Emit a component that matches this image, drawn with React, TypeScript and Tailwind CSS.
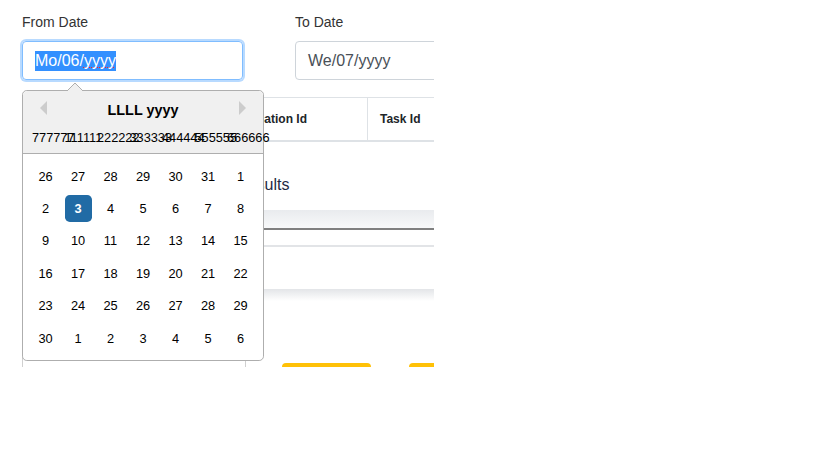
import React from "react";

const dayNames = ["777777", "111111", "222222", "333333", "444444", "555555", "666666"];

const weeks: { d: number; sel?: boolean }[][] = [
  [26, 27, 28, 29, 30, 31, 1].map((d) => ({ d })),
  [2, 3, 4, 5, 6, 7, 8].map((d) => ({ d, sel: d === 3 })),
  [9, 10, 11, 12, 13, 14, 15].map((d) => ({ d })),
  [16, 17, 18, 19, 20, 21, 22].map((d) => ({ d })),
  [23, 24, 25, 26, 27, 28, 29].map((d) => ({ d })),
  [30, 1, 2, 3, 4, 5, 6].map((d) => ({ d })),
];

function DatePickerPopup() {
  return (
    <div className="absolute left-[22px] top-[90px] z-10 w-[242px] rounded-[4.8px] border border-[#aeaeae] bg-white text-black">
      {/* notch */}
      <svg className="absolute left-[43px] top-[-9px]" width="18" height="10" viewBox="0 0 18 10">
        <polygon points="0,10 9,1 18,10" fill="#f0f0f0" />
        <polyline points="0.5,9.5 9,1 17.5,9.5" fill="none" stroke="#aeaeae" strokeWidth="1" />
      </svg>

      {/* header */}
      <div className="relative rounded-t-[4.8px] border-b border-[#aeaeae] bg-[#f0f0f0] pt-[8px]">
        <svg className="absolute left-[17px] top-[10px]" width="7" height="14" viewBox="0 0 7 14">
          <polygon points="7,0 0,7 7,14" fill="#ccc" />
        </svg>
        <svg className="absolute right-[17px] top-[10px]" width="7" height="14" viewBox="0 0 7 14">
          <polygon points="0,0 7,7 0,14" fill="#ccc" />
        </svg>
        <div className="h-[22px] text-center text-[14.4px] font-bold leading-[22px]">LLLL yyyy</div>
        <div className="flex h-[32px] items-center justify-center">
          {dayNames.map((n) => (
            <div key={n} className="w-[32.5px] whitespace-nowrap pl-[2.66px] text-left text-[12.8px] leading-[27px]">
              {n}
            </div>
          ))}
        </div>
      </div>

      {/* month */}
      <div className="my-[6px]">
        {weeks.map((w, i) => (
          <div key={i} className="flex h-[32.4px] items-center justify-center">
            {w.map((c, j) => (
              <div key={j} className="flex w-[32.5px] justify-center">
                <div
                  className={
                    c.sel
                      ? "h-[27px] w-[27px] rounded-[4.8px] bg-[#216ba5] text-center text-[12.8px] font-bold leading-[27px] text-white"
                      : "h-[27px] w-[27px] text-center text-[12.8px] leading-[27px]"
                  }
                >
                  {c.d}
                </div>
              </div>
            ))}
          </div>
        ))}
      </div>
    </div>
  );
}

export default function App() {
  return (
    <div className="h-[460px] w-[819px] bg-white font-['Liberation_Sans',Arial,sans-serif]">
      <div className="relative h-[367px] w-[434px] overflow-hidden">
        <div className="pl-[22px] pt-[12px]">
          {/* date filters */}
          <div className="flex gap-[52px]">
            <div className="w-[221px] shrink-0">
              <div className="mb-2 text-[14px] leading-[21px] text-[#333]">From Date</div>
              <div className="flex h-[39px] items-center rounded-[4px] border border-[#80bdff] px-[12px] text-[16px] text-[#495057] shadow-[0_0_0_2px_rgba(0,123,255,0.28)]">
                <span className="bg-[#3390ff] leading-[20px] text-white">
                  Mo/06/<span className="underline decoration-[#ff2020] decoration-dotted decoration-1 underline-offset-[1px]">yyyy</span>
                </span>
              </div>
            </div>
            <div className="w-[221px] shrink-0">
              <div className="mb-2 text-[14px] leading-[21px] text-[#333]">To Date</div>
              <div className="flex h-[39px] items-center rounded-[4px] border border-[#ced4da] px-[12px] text-[16px] text-[#495057]">
                We/07/yyyy
              </div>
            </div>
          </div>

          {/* table header */}
          <div className="mt-[17px] flex h-[45px] w-[600px] border-t border-b-2 border-[#dee2e6] text-[12px] font-bold text-[#212529]">
            <div className="flex w-[209px] items-center px-3">#</div>
            <div className="flex w-[136px] items-center px-3">Location Id</div>
            <div className="flex w-[160px] items-center border-l border-[#dee2e6] px-3">Task Id</div>
          </div>

          <div className="mt-[31px] pl-[159px] text-[16px] leading-[24px] text-[#1f2a44]">Search Results</div>

          {/* results panel */}
          <div className="mt-[13px] w-[600px]">
            <div className="h-[18px] bg-gradient-to-b from-[#e9ebee] to-[#f8f9fa]" />
            <div className="h-[2px] bg-[#808080]" />
            <div className="h-[15px] bg-white" />
            <div className="h-[2px] bg-[#e2e4e7]" />
            <div className="h-[42px] bg-white" />
            <div className="h-[12px] bg-gradient-to-b from-[#e3e5e8] to-white" />
          </div>

          {/* action row */}
          <div className="mt-[49px] flex">
            <div className="h-[20px] w-[224px] shrink-0 border-x border-[#d0d0d0]" />
            <div className="ml-[36px] mt-[13px] h-[30px] w-[89px] shrink-0 rounded-[4px] bg-[#ffc107]" />
            <div className="ml-[38px] mt-[13px] h-[30px] w-[89px] shrink-0 rounded-[4px] bg-[#ffc107]" />
          </div>
        </div>

        <DatePickerPopup />
      </div>
    </div>
  );
}
